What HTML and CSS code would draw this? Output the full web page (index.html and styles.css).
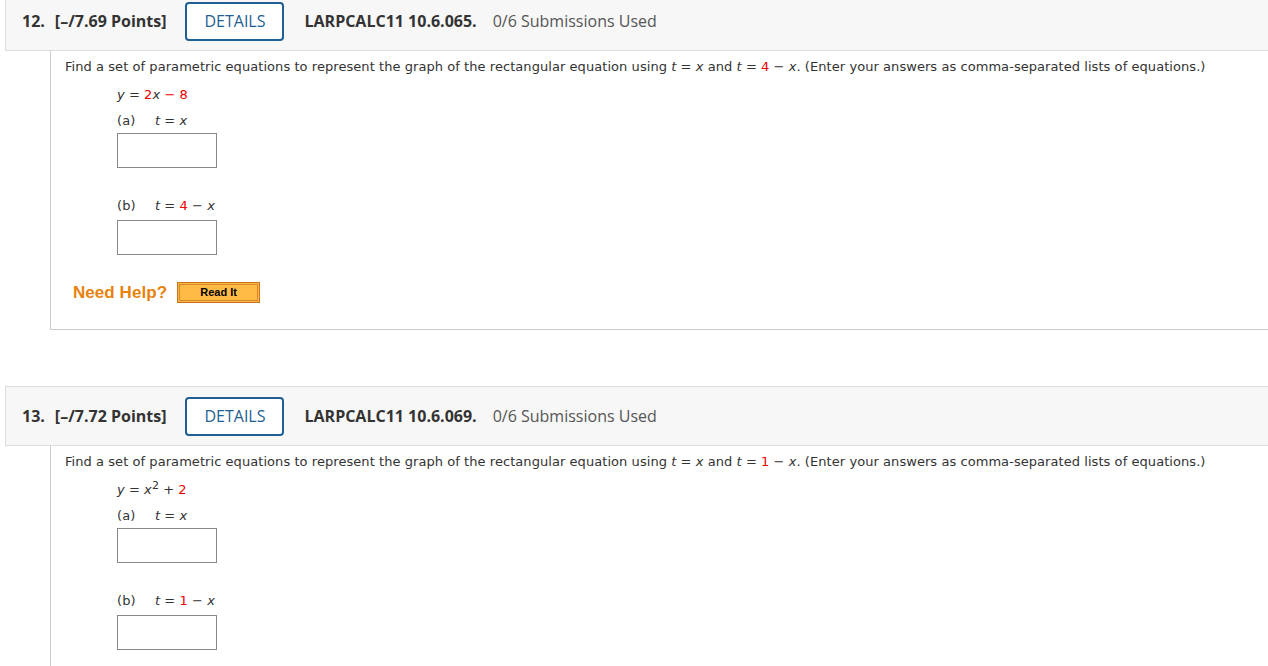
FILE: index.html
```html
<!DOCTYPE html>
<html lang="en">
<head>
  <meta charset="UTF-8">
  <title>Assignment</title>
  <link rel="stylesheet" href="styles.css">
</head>
<body>
  <div class="page">

    <div class="question">
      <div class="q-head">
        <span class="q-num">12.</span>
        <span class="q-pts">[&ndash;/7.69 Points]</span>
        <button class="details">DETAILS</button>
        <span class="q-ref">LARPCALC11 10.6.065.</span>
        <span class="q-subs">0/6 Submissions Used</span>
      </div>
      <div class="q-body">
        <p class="prompt">Find a set of parametric equations to represent the graph of the rectangular equation using <i>t</i> = <i>x</i> and <i>t</i> = <span class="red">4</span> &minus; <i>x</i>. (Enter your answers as comma-separated lists of equations.)</p>
        <div class="eq"><i>y</i> = <span class="red">2<i>x</i> &minus; 8</span></div>
        <div class="part"><span class="label">(a)</span><i>t</i> = <i>x</i></div>
        <input class="answer" type="text">
        <div class="part part-b"><span class="label">(b)</span><i>t</i> = <span class="red">4</span> &minus; <i>x</i></div>
        <input class="answer" type="text">
        <div class="help">
          <span class="help-text">Need Help?</span>
          <button class="read-it"><span>Read It</span></button>
        </div>
      </div>
    </div>

    <div class="question">
      <div class="q-head">
        <span class="q-num">13.</span>
        <span class="q-pts">[&ndash;/7.72 Points]</span>
        <button class="details">DETAILS</button>
        <span class="q-ref">LARPCALC11 10.6.069.</span>
        <span class="q-subs">0/6 Submissions Used</span>
      </div>
      <div class="q-body">
        <p class="prompt">Find a set of parametric equations to represent the graph of the rectangular equation using <i>t</i> = <i>x</i> and <i>t</i> = <span class="red">1</span> &minus; <i>x</i>. (Enter your answers as comma-separated lists of equations.)</p>
        <div class="eq"><i>y</i> = <i>x</i><sup>2</sup> + <span class="red">2</span></div>
        <div class="part"><span class="label">(a)</span><i>t</i> = <i>x</i></div>
        <input class="answer" type="text">
        <div class="part part-b"><span class="label">(b)</span><i>t</i> = <span class="red">1</span> &minus; <i>x</i></div>
        <input class="answer" type="text">
      </div>
    </div>

  </div>
</body>
</html>
```

FILE: styles.css
```css
html, body {
  margin: 0;
  overflow: hidden;
  background: #fff;
}
.page {
  margin: -9px -3px 0 5px;
}
.question {
  margin-bottom: 56px;
}
.q-head {
  display: flex;
  align-items: center;
  height: 58px;
  padding-left: 16px;
  background: #f7f7f7;
  border: 1px solid #dddddd;
  font-family: "Open Sans", sans-serif;
  font-size: 16px;
  color: #333;
}
.q-num {
  font-weight: 700;
  margin-right: 10px;
}
.q-pts {
  font-weight: 700;
}
.details {
  margin-left: 19px;
  width: 99px;
  height: 39px;
  border: 2px solid #1f5f93;
  border-radius: 4px;
  background: #fff;
  color: #1f5f93;
  font-family: "Open Sans", sans-serif;
  font-size: 16px;
  font-weight: 500;
  padding: 0;
}
.q-ref {
  margin-left: 20px;
  font-weight: 700;
}
.q-subs {
  margin-left: 16px;
  color: #555;
}
.q-body {
  margin-left: 45px;
  border-left: 1px solid #cccccc;
  border-bottom: 1px solid #cccccc;
  padding: 8px 0 26px 14px;
  font-family: "DejaVu Sans", Verdana, sans-serif;
  font-size: 13px;
  line-height: 16px;
  letter-spacing: 0.06px;
  color: #333;
}
.prompt {
  margin: 0;
}
.red {
  color: #ee0000;
}
.red i {
  color: #333;
}
.eq {
  margin: 12px 0 0 52px;
}
.eq sup {
  font-size: 11px;
  line-height: 0;
}
.part {
  margin: 10px 0 0 52px;
}
.part-b {
  margin-top: 30px;
}
.label {
  display: inline-block;
  width: 38px;
}
.answer {
  display: block;
  box-sizing: border-box;
  width: 100px;
  height: 35px;
  margin: 4px 0 0 52px;
  border: 1px solid #888;
  background: #fff;
}
.part-b + .answer {
  margin-top: 6px;
}
.help {
  display: flex;
  align-items: center;
  margin: 27px 0 0 8px;
}
.help-text {
  font-family: "Liberation Sans", Arial, sans-serif;
  font-weight: 700;
  font-size: 17px;
  color: #e8820c;
}
.read-it {
  margin-left: 10px;
  width: 83px;
  height: 21px;
  padding: 1px;
  border: 1px solid #c9741c;
  background: #fdb646;
}
.read-it span {
  display: block;
  height: 100%;
  box-sizing: border-box;
  border: 1px solid #d98a2c;
  background: #ffbb46;
  font-family: "Liberation Sans", Arial, sans-serif;
  font-weight: 700;
  font-size: 11px;
  line-height: 15px;
  color: #000;
}
```
